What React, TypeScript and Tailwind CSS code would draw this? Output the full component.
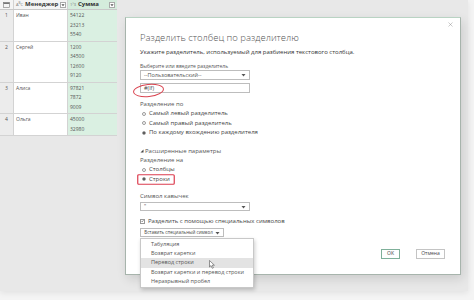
import { X } from "lucide-react";

const rows = [
  { n: 1, name: "Иван", sums: ["54122", "23213", "5540"] },
  { n: 2, name: "Сергей", sums: ["1200", "34500", "12600", "9120"] },
  { n: 3, name: "Алиса", sums: ["97821", "7872", "9009"] },
  { n: 4, name: "Ольга", sums: ["45000", "32980"] },
];

const menuItems = [
  "Табуляция",
  "Возврат каретки",
  "Перевод строки",
  "Возврат каретки и перевод строки",
  "Неразрывный пробел",
];

const Radio = ({ on, label }: { on?: boolean; label: string }) => (
  <div className="h-[9.5px] flex items-center pl-[2px] gap-[3px]">
    <span className="w-[4px] h-[4px] rounded-full border-[0.5px] border-[#9a9a9a] flex items-center justify-center">
      {on && <span className="w-[2px] h-[2px] rounded-full bg-[#333]" />}
    </span>
    <span className="text-[6px] leading-[9.5px] text-[#444]">{label}</span>
  </div>
);

const Caret = () => (
  <svg width="5" height="4" viewBox="0 0 5 4">
    <path d="M0.5 1 L4.5 1 L2.5 3.5 Z" fill="#555" />
  </svg>
);

const Table = () => (
  <div className="w-[117px] flex flex-col text-[5px]">
    {/* header */}
    <div className="h-[10px] flex border-b border-[#c9c9c9] bg-[#f4f4f4]">
      <div className="w-[14px] flex items-center justify-center border-r border-[#d3d3d3]">
        <svg width="7" height="6" viewBox="0 0 7 6">
          <rect x="0.5" y="0.5" width="6" height="5" fill="none" stroke="#777" strokeWidth="0.6" />
          <rect x="0.5" y="0.5" width="6" height="1.5" fill="#777" />
        </svg>
      </div>
      <div className="w-[54px] flex items-center px-[2px] gap-[2px] border-r border-[#d3d3d3]">
        <span className="text-[4px] text-[#777] leading-none">A<sup>B</sup>C</span>
        <span className="font-bold text-[6px] text-[#333] flex-1">Менеджер</span>
        <span className="w-[6px] h-[6px] border-[0.5px] border-[#aaa] bg-white flex items-center justify-center">
          <Caret />
        </span>
      </div>
      <div className="w-[49px] flex items-center px-[2px] gap-[2px] bg-[#d4ecdc]">
        <span className="text-[4px] text-[#777] leading-none">1²3</span>
        <span className="font-bold text-[6px] text-[#333] flex-1">Сумма</span>
        <span className="w-[6px] h-[6px] border-[0.5px] border-[#aaa] bg-white flex items-center justify-center">
          <Caret />
        </span>
      </div>
    </div>
    {rows.map((r) => (
      <div key={r.n} className="flex border-b border-[#d3d3d3]">
        <div className="w-[14px] bg-[#ececec] border-r border-[#d3d3d3] text-center text-[#555] pt-[1px] leading-[9.5px]">
          {r.n}
        </div>
        <div className="w-[54px] bg-white border-r border-[#d3d3d3] px-[2px] text-[#555] pt-[1px] leading-[9.5px]">
          {r.name}
        </div>
        <div className="w-[49px] bg-[#daf0e2] px-[2px] text-[#555] py-[1px] leading-[9.5px]">
          {r.sums.map((s) => (
            <div key={s}>{s}</div>
          ))}
        </div>
      </div>
    ))}
  </div>
);

const Dialog = () => (
  <div className="absolute left-[125px] top-[17px] w-[336px] h-[258px] bg-white border border-[#a7b4ac] border-t-[#b9d3c3] shadow-[2px_4px_10px_rgba(0,0,0,0.12)] pl-[14px] pr-[14px] flex flex-col">
    <X className="absolute right-[6px] top-[3px] text-[#888]" size={7} strokeWidth={1.5} />
    <div className="pt-[14px] text-[9.5px] leading-[12px] font-light text-[#555]">
      Разделить столбец по разделителю
    </div>
    <div className="mt-[4px] text-[6px] leading-[8px] text-[#333]">
      Укажите разделитель, используемый для разбиения текстового столбца.
    </div>
    <div className="mt-[6px] text-[5px] leading-[8px] text-[#555]">
      Выберите или введите разделитель
    </div>
    <div className="w-[110px] h-[10px] border-[0.5px] border-[#bdbdbd] flex items-center justify-between px-[3px] text-[5.5px] text-[#555]">
      <span>--Пользовательский--</span>
      <Caret />
    </div>
    <div className="relative mt-[3px] w-[110px] h-[10px] border-[0.5px] border-[#bdbdbd] flex items-center px-[3px] text-[5.5px] text-[#444]">
      <span>#(lf)</span>
      <span className="absolute left-[-8px] top-[0px] w-[31px] h-[13px] rounded-[50%] border border-[#d9434f] rotate-[-6deg]" />
    </div>
    <div className="mt-[7px] text-[6px] leading-[8px] text-[#555]">Разделение по</div>
    <div className="mt-[1px] flex flex-col">
      <Radio label="Самый левый разделитель" />
      <Radio label="Самый правый разделитель" />
      <Radio on label="По каждому вхождению разделителя" />
    </div>
    <div className="mt-[9.5px] text-[6px] leading-[8px] text-[#555] flex items-center gap-[1px]">
      <svg width="4" height="4" viewBox="0 0 4 4">
        <path d="M3.5 0.5 L3.5 3.5 L0.5 3.5 Z" fill="#444" />
      </svg>
      Расширенные параметры
    </div>
    <div className="mt-[1px] text-[6px] leading-[8px] text-[#555]">Разделение на</div>
    <div className="mt-[1px] flex flex-col relative">
      <Radio label="Столбцы" />
      <Radio on label="Строки" />
      <svg className="absolute left-[-3px] top-[9px]" width="38" height="11" viewBox="0 0 38 11">
        <rect x="0.75" y="0.75" width="36.5" height="9.5" rx="1" fill="none" stroke="#dc3d4f" strokeWidth="1.2" />
      </svg>
    </div>
    <div className="mt-[8px] text-[6px] leading-[8px] text-[#555]">Символ кавычек</div>
    <div className="mt-[2px] w-[110px] h-[9px] border-[0.5px] border-[#bdbdbd] flex items-center justify-between px-[3px] text-[5.5px] text-[#555]">
      <span>"</span>
      <Caret />
    </div>
    <div className="mt-[6px] h-[8px] flex items-center gap-[3px] text-[6px] text-[#444]">
      <span className="w-[5px] h-[5px] border-[0.5px] border-[#999] flex items-center justify-center">
        <svg width="4" height="4" viewBox="0 0 4 4">
          <path d="M0.5 2 L1.6 3.2 L3.5 0.8" fill="none" stroke="#333" strokeWidth="0.6" />
        </svg>
      </span>
      Разделить с помощью специальных символов
    </div>
    <div className="mt-[3px] w-[84px] h-[9px] border-[0.5px] border-[#bdbdbd] flex items-center justify-center gap-[2px] text-[4.5px] text-[#444] whitespace-nowrap">
      <span>Вставить специальный символ</span>
      <Caret />
    </div>
    <div className="mt-[12px] flex justify-end gap-[16px] pr-[1px]">
      <div className="w-[19px] h-[10px] border border-[#7fb09a] flex items-center justify-center text-[5px] text-[#444]">
        OK
      </div>
      <div className="w-[29px] h-[10px] border-[0.5px] border-[#c4c4c4] flex items-center justify-center text-[5px] text-[#444]">
        Отмена
      </div>
    </div>
  </div>
);

const Menu = () => (
  <div className="absolute left-[140px] top-[238px] w-[114px] bg-white border-[0.5px] border-[#c8c8c8] shadow-[1px_2px_4px_rgba(0,0,0,0.2)] py-[0.5px]">
    {menuItems.map((m) => (
      <div
        key={m}
        className={
          "h-[9.4px] leading-[9.4px] pl-[10px] text-[5.5px] text-[#555] " +
          (m === "Перевод строки" ? "bg-[#e3e3e3]" : "")
        }
      >
        {m}
      </div>
    ))}
    <svg className="absolute left-[68px] top-[21px]" width="7" height="9" viewBox="0 0 7 9">
      <path d="M0.5 0.5 L0.5 7 L2 5.6 L3.3 8.3 L4.4 7.8 L3.2 5.2 L5.4 5.2 Z" fill="white" stroke="#333" strokeWidth="0.5" />
    </svg>
  </div>
);

const App = () => {
  return (
    <div className="w-[474px] h-[300px] bg-[#f4f4f4] overflow-hidden font-['Open_Sans','Noto_Sans',sans-serif]">
      <div className="relative w-[468px] h-[291px] bg-[#e8e8e8] shadow-[0_2px_6px_rgba(0,0,0,0.08)]">
        <Table />
        <Dialog />
        <Menu />
      </div>
    </div>
  );
};

export default App;
